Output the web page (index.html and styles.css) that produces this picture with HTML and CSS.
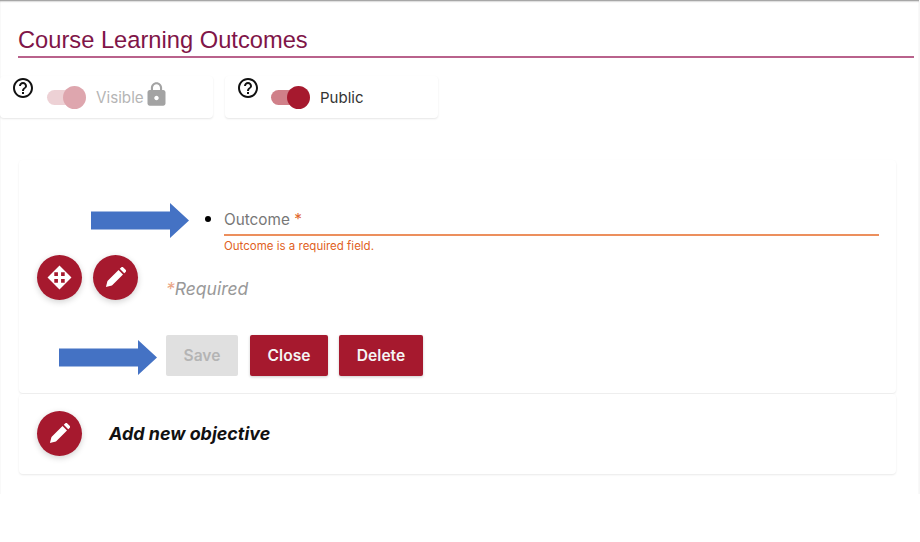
FILE: index.html

```html
<!DOCTYPE html>
<html lang="en">
<head>
    <meta charset="UTF-8">
    <meta name="viewport" content="width=device-width, initial-scale=1.0">
    <title>Course Learning Outcomes</title>
    <link rel="stylesheet" href="styles.css">
</head>
<body>
    <div class="page">
        <h1 class="title">Course Learning Outcomes</h1>

        <div class="switches">
            <div class="switch-card">
                <svg class="help" viewBox="0 0 24 24"><path d="M11 18h2v-2h-2v2zm1-16C6.48 2 2 6.48 2 12s4.48 10 10 10 10-4.48 10-10S17.52 2 12 2zm0 18c-4.41 0-8-3.59-8-8s3.59-8 8-8 8 3.59 8 8-3.59 8-8 8zm0-14c-2.21 0-4 1.79-4 4h2c0-1.1.9-2 2-2s2 .9 2 2c0 2-3 1.75-3 5h2c0-2.25 3-2.5 3-5 0-2.21-1.79-4-4-4z"/></svg>
                <span class="toggle toggle-off"><span class="knob"></span></span>
                <span class="switch-label muted">Visible</span>
                <svg class="lock" viewBox="0 0 24 24"><path d="M18 8h-1V6c0-2.76-2.24-5-5-5S7 3.24 7 6v2H6c-1.1 0-2 .9-2 2v10c0 1.1.9 2 2 2h12c1.1 0 2-.9 2-2V10c0-1.1-.9-2-2-2zm-6 9c-1.1 0-2-.9-2-2s.9-2 2-2 2 .9 2 2-.9 2-2 2zm3.1-9H8.900V6c0-1.710 1.390-3.100 3.100-3.100s3.100 1.390 3.100 3.100v2z"/></svg>
            </div>
            <div class="switch-card">
                <svg class="help" viewBox="0 0 24 24"><path d="M11 18h2v-2h-2v2zm1-16C6.48 2 2 6.48 2 12s4.48 10 10 10 10-4.48 10-10S17.52 2 12 2zm0 18c-4.41 0-8-3.59-8-8s3.59-8 8-8 8 3.59 8 8-3.59 8-8 8zm0-14c-2.21 0-4 1.79-4 4h2c0-1.1.9-2 2-2s2 .9 2 2c0 2-3 1.75-3 5h2c0-2.25 3-2.5 3-5 0-2.21-1.79-4-4-4z"/></svg>
                <span class="toggle"><span class="knob"></span></span>
                <span class="switch-label">Public</span>
            </div>
        </div>

        <div class="card edit-card">
            <ul class="outcomes">
                <li>
                    <div class="field">
                        <span class="field-label">Outcome <span class="star">*</span></span>
                    </div>
                    <div class="field-error">Outcome is a required field.</div>
                </li>
            </ul>

            <div class="tools">
                <span class="round-btn">
                    <svg viewBox="0 0 24 24"><path fill-rule="evenodd" d="M12 .5L23.500 12 12 23.500 .5 12zM7 7v3.500h3.500V7zM13.500 7v3.500H17V7zM7 13.500V17h3.500v-3.500zM13.500 13.500V17H17v-3.500z"/></svg>
                </span>
                <span class="round-btn">
                    <svg viewBox="0 0 24 24"><path d="M2.800 21.200l1.500-5.800L14.900 4.800l4.300 4.300L8.600 19.700zM16.100 3.600l1.300-1.300c.6-.6 1.500-.6 2.100 0l2.200 2.200c.6.6.6 1.500 0 2.100l-1.300 1.300z"/></svg>
                </span>
                <span class="required-note"><span class="star">*</span>Required</span>
            </div>

            <div class="actions">
                <button class="btn btn-disabled">Save</button>
                <button class="btn">Close</button>
                <button class="btn">Delete</button>
            </div>
        </div>

        <div class="card add-card">
            <span class="round-btn">
                <svg viewBox="0 0 24 24"><path d="M2.800 21.200l1.500-5.800L14.900 4.800l4.300 4.300L8.600 19.700zM16.100 3.600l1.300-1.300c.6-.6 1.500-.6 2.100 0l2.200 2.200c.6.6.6 1.500 0 2.100l-1.300 1.300z"/></svg>
            </span>
            <span class="add-label">Add new objective</span>
        </div>

        <!-- arrows pasted over the screenshot -->
        <svg class="arrow arrow-field" viewBox="0 0 98 35"><path d="M0 8.500h79V0l19 17.500-19 17.500v-8.500H0z"/></svg>
        <svg class="arrow arrow-save" viewBox="0 0 98 35"><path d="M0 8.500h79V0l19 17.500-19 17.500v-8.500H0z"/></svg>
    </div>
</body>
</html>
```

FILE: styles.css

```css
* {
    box-sizing: border-box;
}

body {
    margin: 0;
    background: #fff;
    font-family: Inter, "Liberation Sans", sans-serif;
    color: #333;
}

.page {
    position: relative;
    height: 494px;
    padding: 0 5px 0 0;
    border-right: 1px solid #f6f6f6;
    box-shadow: inset 0 2px 2px -1px #888;
    overflow: hidden;
}

.title {
    margin: 0 0 0 18px;
    padding: 26px 0 2px;
    font-family: "Liberation Sans", Arial, sans-serif;
    font-size: 23.700px;
    line-height: 28px;
    font-weight: 400;
    color: #7f1548;
    border-bottom: 2px solid #b9628c;
}

.switches {
    display: flex;
    gap: 12px;
    margin-top: 18px;
}

.switch-card {
    display: flex;
    align-items: center;
    width: 213px;
    height: 42px;
    padding: 0 0 0 14px;
    background: #fff;
    border-radius: 4px;
    box-shadow: 0 1px 2px rgba(0, 0, 0, 0.1);
}

.help {
    width: 24px;
    height: 24px;
    margin: -18px 11px 0 -3px;
    fill: #111;
}

.switch-card:first-child .help {
    margin-right: 12px;
}

.toggle {
    position: relative;
    display: block;
    width: 35px;
    height: 15px;
    margin: 0 14px 0 0;
    border-radius: 8px;
    background: #d08089;
}

.knob {
    position: absolute;
    right: -4px;
    top: -4px;
    width: 23px;
    height: 23px;
    border-radius: 50%;
    background: #a6192e;
}

.toggle-off {
    background: #edd1d5;
}

.toggle-off .knob {
    background: #dea6ae;
}

.switch-label {
    font-size: 15px;
    color: #333;
}

.switch-label.muted {
    font-size: 15.200px;
    color: #b5b5b5;
}

.lock {
    width: 27px;
    height: 27px;
    margin: -5px 0 0 -1px;
    fill: #a3a3a3;
}

.card {
    margin-left: 19px;
    width: 877px;
    background: #fff;
    border-radius: 4px;
    box-shadow: 0 1px 2px rgba(0, 0, 0, 0.09);
}

.edit-card {
    height: 233px;
    margin-top: 42px;
    padding: 47px 0 0 18px;
}

.outcomes {
    margin: 0;
    padding: 0 17px 0 187px;
}

.outcomes li::marker {
    font-size: 19px;
    color: #000;
}

.field {
    height: 26px;
    border-bottom: 2px solid #ec8f5d;
}

.field-label {
    display: block;
    font-size: 15.300px;
    line-height: 20px;
    color: #777;
}

.star {
    color: #e2672c;
}

.field-error {
    margin-top: 2px;
    font-size: 11.500px;
    line-height: 16px;
    color: #df5f24;
}

.tools {
    display: flex;
    align-items: center;
    gap: 11px;
}

.round-btn {
    display: flex;
    align-items: center;
    justify-content: center;
    flex: none;
    width: 45px;
    height: 45px;
    border-radius: 50%;
    background: #a6192e;
    box-shadow: 0 2px 6px rgba(0, 0, 0, 0.18);
}

.round-btn svg {
    width: 25px;
    height: 25px;
    fill: #fff;
}

.required-note {
    margin: 23px 0 0 17px;
    font-size: 17.500px;
    line-height: 24px;
    font-style: italic;
    color: #999;
}

.required-note .star {
    color: #eba687;
}

.actions {
    display: flex;
    gap: 11px;
    margin: 34px 0 0 129px;
}

.btn {
    width: 78px;
    height: 41px;
    padding: 0;
    border: 0;
    border-radius: 2px;
    background: #a6192e;
    color: #f5f5f5;
    font-family: inherit;
    font-size: 15.600px;
    font-weight: 600;
    box-shadow: 0 1px 3px rgba(0, 0, 0, 0.2);
}

.btn:last-child {
    width: 84px;
}

.btn-disabled {
    width: 72px;
    margin-right: 1px;
    background: #e0e0e0;
    color: #b4b4b4;
    box-shadow: none;
}

.add-card {
    display: flex;
    align-items: center;
    height: 80px;
    margin-top: 1px;
    padding: 0 0 2px 18px;
}

.add-label {
    margin-left: 27px;
    font-size: 17.900px;
    font-weight: 700;
    font-style: italic;
    color: #111;
}

.arrow {
    position: absolute;
    width: 98px;
    height: 35px;
    fill: #4472c4;
}

.arrow-field {
    left: 91px;
    top: 203px;
}

.arrow-save {
    left: 59px;
    top: 340px;
}
```
